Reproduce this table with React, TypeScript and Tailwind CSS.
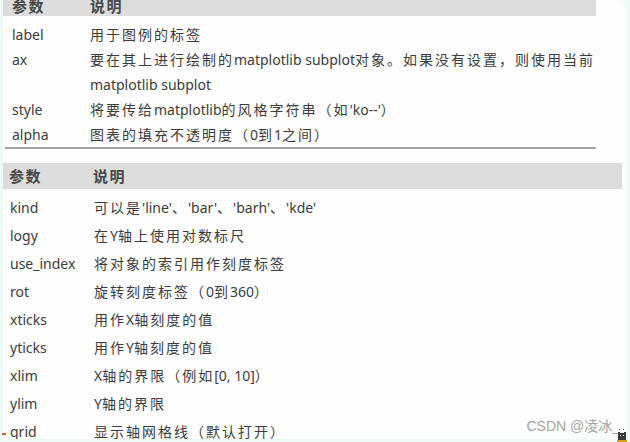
import React from "react";

const table1 = [
  { name: "label", desc: "用于图例的标签" },
  { name: "ax", desc: "要在其上进行绘制的matplotlib subplot对象。如果没有设置，则使用当前" },
  { name: "", desc: "matplotlib subplot" },
  { name: "style", desc: "将要传给matplotlib的风格字符串（如'ko--'）" },
  { name: "alpha", desc: "图表的填充不透明度（0到1之间）" },
];

const table2 = [
  { name: "kind", desc: "可以是'line'、'bar'、'barh'、'kde'" },
  { name: "logy", desc: "在Y轴上使用对数标尺" },
  { name: "use_index", desc: "将对象的索引用作刻度标签" },
  { name: "rot", desc: "旋转刻度标签（0到360）" },
  { name: "xticks", desc: "用作X轴刻度的值" },
  { name: "yticks", desc: "用作Y轴刻度的值" },
  { name: "xlim", desc: "X轴的界限（例如[0, 10]）" },
  { name: "ylim", desc: "Y轴的界限" },
  { name: "grid", desc: "显示轴网格线（默认打开）" },
];

// CJK runs get a bit of extra spacing, like the scanned book page
function Mixed({ text }: { text: string }) {
  const parts = text.split(/([\u3000-\u303f\u4e00-\u9fff\uff00-\uffef]+)/);
  return (
    <>
      {parts.map((p, i) =>
        /[\u3000-\u303f\u4e00-\u9fff\uff00-\uffef]/.test(p) ? (
          <span key={i} className="tracking-[2px]">
            {p}
          </span>
        ) : (
          <span key={i}>{p}</span>
        )
      )}
    </>
  );
}

function Cat() {
  return (
    <svg width="12" height="14" viewBox="0 0 12 14" className="absolute right-[2px] bottom-0">
      <rect x="3" y="1" width="1" height="1" fill="#555" />
      <rect x="7" y="1" width="1" height="1" fill="#555" />
      <rect x="2" y="5" width="8" height="7" fill="#3a3a3a" />
      <rect x="2" y="4" width="2" height="1" fill="#3a3a3a" />
      <rect x="8" y="4" width="2" height="1" fill="#3a3a3a" />
      <rect x="4" y="7" width="1" height="1" fill="#eee" />
      <rect x="7" y="7" width="1" height="1" fill="#eee" />
      <rect x="1" y="12" width="10" height="2" fill="#d4a020" />
    </svg>
  );
}

export default function App() {
  return (
    <div
      className="w-[630px] h-[442px] bg-[#eefaf6] pl-[3px] pr-[4px] pb-[3px] relative"
      style={{ fontFamily: '"Noto Sans", "Noto Sans CJK SC", sans-serif' }}
    >
      <div className="h-full bg-[#fdfdfd] rounded-tr-[10px] rounded-br-[2px] overflow-hidden text-[14px] text-[#3c3c3c]">
        {/* first table */}
        <div className="w-[593px]">
          <div className="h-[16px] bg-[#dcdcdc] flex items-end overflow-hidden">
            <div className="flex leading-[19px] font-semibold text-[#484848] text-[15px]">
              <span className="w-[87px] pl-[9px] tracking-[1.5px]">参数</span>
              <span className="tracking-[1.5px]">说明</span>
            </div>
          </div>
          <div className="pt-[6px]">
            {table1.map((r, i) => (
              <div key={i} className="h-[25px] flex items-center">
                <span className="w-[87px] pl-[9px]">{r.name}</span>
                <span className="whitespace-nowrap">
                  <Mixed text={r.desc} />
                </span>
              </div>
            ))}
          </div>
          <div className="ml-[2px] h-[2px] bg-[#a3a3a3]" />
        </div>

        {/* second table */}
        <div className="mt-[14px] w-[619px]">
          <div className="h-[26px] bg-[#dcdcdc] flex items-center font-semibold text-[#484848] text-[15px]">
            <span className="w-[90px] pl-[6px] tracking-[1.5px]">参数</span>
            <span className="tracking-[1.5px]">说明</span>
          </div>
          <div className="pt-[4px]">
            {table2.map((r) => (
              <div key={r.name} className="h-[28px] flex items-center">
                <span className="w-[91px] pl-[7px]">{r.name}</span>
                <span className="whitespace-nowrap">
                  <Mixed text={r.desc} />
                </span>
              </div>
            ))}
          </div>
        </div>
      </div>

      {/* watermark */}
      <div
        className="absolute right-[10px] bottom-[9px] text-[14px] text-[#a5a5a5] leading-none"
        style={{ fontFamily: '"Liberation Sans", "Noto Sans CJK SC", sans-serif' }}
      >
        CSDN @凌冰_
      </div>
      <Cat />
      <div className="absolute left-[2px] bottom-[7px] w-[4px] h-[2px] bg-[#c8642a]" />
    </div>
  );
}
